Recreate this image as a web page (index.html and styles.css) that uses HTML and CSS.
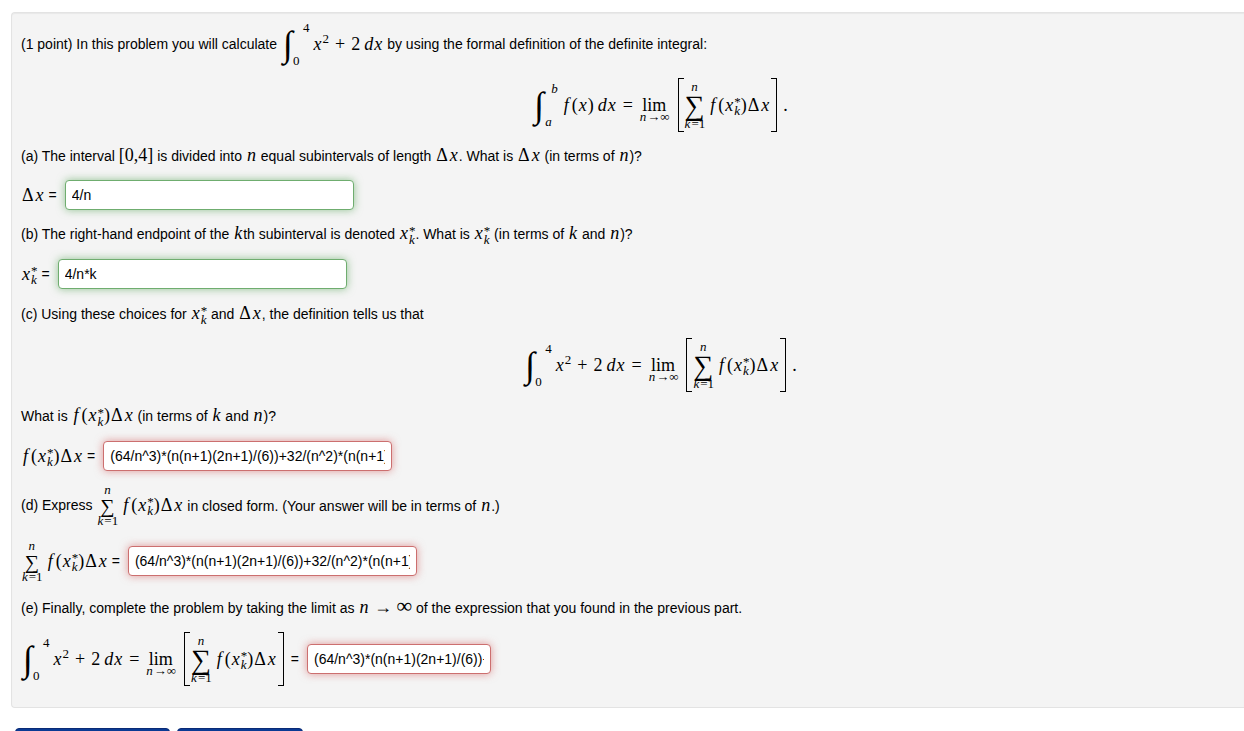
FILE: index.html
```html
<!DOCTYPE html>
<html lang="en">
<head>
    <meta charset="UTF-8">
    <meta name="viewport" content="width=device-width, initial-scale=1.0">
    <title>Definite integral</title>
    <link rel="stylesheet" href="styles.css">
</head>
<body>
<div class="problem">
    <div class="row intro">
        <span>(1 point) In this problem you will calculate</span>
        <span class="math"><span class="int">∫</span><span class="limits wide"><span>4</span><span>0</span></span><span><i>x</i><sup>2</sup></span><span class="rel">+</span><span>2</span><span class="diff"><i>d</i><i>x</i></span></span>
        <span>by using the formal definition of the definite integral:</span>
    </div>

    <div class="row display">
        <span class="math"><span class="int">∫</span><span class="limits"><i>b</i><i>a</i></span><span><i class="f">f</i>(<i>x</i>)</span><span class="diff"><i>d</i><i>x</i></span><span class="rel">=</span><span class="lim"><span>lim</span><small><i>n</i>→∞</small></span><span class="bracket"><span class="sum"><i>n</i><b>∑</b><small><i>k</i>=1</small></span><span><i class="f">f</i>(<i>x</i><span class="stack"><span>*</span><i>k</i></span>)<span class="delta">Δ</span><i>x</i></span></span><span class="end">.</span></span>
    </div>

    <!-- part a -->
    <p class="row text">(a) The interval <span class="tex">[0,4]</span> is divided into <span class="tex"><i>n</i></span> equal subintervals of length <span class="tex"><span class="delta">Δ</span><i>x</i></span>. What is <span class="tex"><span class="delta">Δ</span><i>x</i></span> (in terms of <span class="tex"><i>n</i></span>)?</p>
    <div class="row answer">
        <label for="ansA"><span class="tex"><span class="delta">Δ</span><i>x</i></span> =</label>
        <input type="text" id="ansA" class="correct" value="4/n">
    </div>

    <!-- part b -->
    <p class="row text">(b) The right-hand endpoint of the <span class="tex"><i>k</i></span>th subinterval is denoted <span class="tex"><i>x</i><span class="stack"><span>*</span><i>k</i></span></span>. What is <span class="tex"><i>x</i><span class="stack"><span>*</span><i>k</i></span></span> (in terms of <span class="tex"><i>k</i></span> and <span class="tex"><i>n</i></span>)?</p>
    <div class="row answer tall">
        <label for="ansB"><span class="tex"><i>x</i><span class="stack"><span>*</span><i>k</i></span></span> =</label>
        <input type="text" id="ansB" class="correct" value="4/n*k">
    </div>

    <!-- part c -->
    <p class="row text">(c) Using these choices for <span class="tex"><i>x</i><span class="stack"><span>*</span><i>k</i></span></span> and <span class="tex"><span class="delta">Δ</span><i>x</i></span>, the definition tells us that</p>
    <div class="row display">
        <span class="math"><span class="int">∫</span><span class="limits wide"><span>4</span><span>0</span></span><span><i>x</i><sup>2</sup></span><span class="rel">+</span><span>2</span><span class="diff"><i>d</i><i>x</i></span><span class="rel">=</span><span class="lim"><span>lim</span><small><i>n</i>→∞</small></span><span class="bracket"><span class="sum"><i>n</i><b>∑</b><small><i>k</i>=1</small></span><span><i class="f">f</i>(<i>x</i><span class="stack"><span>*</span><i>k</i></span>)<span class="delta">Δ</span><i>x</i></span></span><span class="end">.</span></span>
    </div>
    <p class="row text">What is <span class="tex"><i class="f">f</i>(<i>x</i><span class="stack"><span>*</span><i>k</i></span>)<span class="delta">Δ</span><i>x</i></span> (in terms of <span class="tex"><i>k</i></span> and <span class="tex"><i>n</i></span>)?</p>
    <div class="row answer tall">
        <label for="ansC"><span class="tex"><i class="f">f</i>(<i>x</i><span class="stack"><span>*</span><i>k</i></span>)<span class="delta">Δ</span><i>x</i></span> =</label>
        <input type="text" id="ansC" class="incorrect" value="(64/n^3)*(n(n+1)(2n+1)/(6))+32/(n^2)*(n(n+1)/2)">
    </div>

    <!-- part d -->
    <div class="row express">
        <span>(d) Express</span>
        <span class="math"><span class="sum small"><i>n</i><b>∑</b><small><i>k</i>=1</small></span><span><i class="f">f</i>(<i>x</i><span class="stack"><span>*</span><i>k</i></span>)<span class="delta">Δ</span><i>x</i></span></span>
        <span>in closed form. (Your answer will be in terms of <span class="tex"><i>n</i></span>.)</span>
    </div>
    <div class="row answer series">
        <label for="ansD"><span class="math"><span class="sum small"><i>n</i><b>∑</b><small><i>k</i>=1</small></span><span><i class="f">f</i>(<i>x</i><span class="stack"><span>*</span><i>k</i></span>)<span class="delta">Δ</span><i>x</i></span></span> =</label>
        <input type="text" id="ansD" class="incorrect" value="(64/n^3)*(n(n+1)(2n+1)/(6))+32/(n^2)*(n(n+1)/2)">
    </div>

    <!-- part e -->
    <p class="row text">(e) Finally, complete the problem by taking the limit as <span class="tex"><i>n</i> → <span class="inf">∞</span></span> of the expression that you found in the previous part.</p>
    <div class="row answer final">
        <label for="ansE"><span class="math"><span class="int">∫</span><span class="limits wide"><span>4</span><span>0</span></span><span><i>x</i><sup>2</sup></span><span class="rel">+</span><span>2</span><span class="diff"><i>d</i><i>x</i></span><span class="rel">=</span><span class="lim"><span>lim</span><small><i>n</i>→∞</small></span><span class="bracket"><span class="sum"><i>n</i><b>∑</b><small><i>k</i>=1</small></span><span><i class="f">f</i>(<i>x</i><span class="stack"><span>*</span><i>k</i></span>)<span class="delta">Δ</span><i>x</i></span></span></span> =</label>
        <input type="text" id="ansE" class="incorrect short" value="(64/n^3)*(n(n+1)(2n+1)/(6))+32/(n^2)*(n(n+1)/2)">
    </div>
</div>

<div class="buttons">
    <button type="button" class="preview"></button>
    <button type="button" class="submit"></button>
</div>
</body>
</html>
```
FILE: styles.css
```css
* {
    box-sizing: border-box;
}
html, body {
    height: 100%;
    overflow: hidden;
}
body {
    margin: 0;
    padding: 12px 0 0 11px;
    background: #fff;
    color: #000;
    font: 14px "Liberation Sans", Arial, sans-serif;
}

.problem {
    display: flex;
    flex-direction: column;
    gap: 10px;
    padding: 9px 0 19px 9px;
    background: #f4f4f4;
    border: 1px solid #e3e3e3;
    border-right: none;
    border-radius: 4px 0 0 4px;
    box-shadow: inset 0 1px 1px rgba(0, 0, 0, 0.05);
}
.row {
    display: flex;
    align-items: center;
    gap: 4px;
    margin: 0;
    white-space: nowrap;
}
.text {
    display: block;
    height: 24px;
    line-height: 24px;
}
.intro {
    height: 44px;
}
.display {
    height: 58px;
    padding-left: 55px;
    justify-content: center;
}
.answer {
    height: 34px;
    gap: 8px;
}
.tall {
    height: 36px;
}
.express {
    height: 42px;
}
.series {
    height: 50px;
}
.final {
    height: 58px;
}
label {
    display: flex;
    align-items: center;
    gap: 4px;
}
.final label {
    gap: 7px;
}

/* formulas */
.tex, .math {
    font-family: "Liberation Serif", "Times New Roman", serif;
    font-size: 18px;
    line-height: 20px;
}
.math {
    display: inline-flex;
    align-items: center;
}
.tex i, .math i {
    padding: 0 1px;
}
.tex .f, .math .f {
    padding: 0 3px 0 2px;
}
.math .diff i {
    padding: 0 1px 0 0;
}
.delta {
    padding: 0 1px;
}
.inf {
    font-size: 22px;
    line-height: 20px;
}
.math sup {
    font-size: 13px;
    line-height: 1px;
}
.stack {
    display: inline-flex;
    flex-direction: column;
    vertical-align: middle;
    font-size: 13px;
    line-height: 9px;
}
.stack i {
    padding: 0;
}
.rel {
    padding: 0 6px;
}
.diff {
    padding-left: 4px;
}
.int {
    width: 10px;
    margin-left: 2px;
    font-size: 36px;
    line-height: 44px;
}
.limits {
    display: flex;
    flex-direction: column;
    justify-content: space-between;
    height: 46px;
    padding-right: 3px;
    font-size: 13px;
    line-height: 13px;
}
.limits :first-child {
    padding-left: 7px;
}
.limits.wide :first-child {
    padding-left: 10px;
}
.lim {
    display: flex;
    flex-direction: column;
    align-items: center;
    padding-top: 9px;
    line-height: 14px;
}
.math small {
    font-size: 13px;
    line-height: 10px;
}
.sum {
    display: flex;
    flex-direction: column;
    align-items: center;
    margin-right: 3px;
    font-size: 13px;
    line-height: 12px;
}
.sum b {
    font-size: 28px;
    font-weight: normal;
    line-height: 26px;
}
.sum.small b {
    font-size: 20px;
    line-height: 20px;
}
.bracket {
    display: flex;
    align-items: center;
    margin-left: 8px;
}
.bracket::before, .bracket::after {
    content: "";
    width: 5px;
    height: 52px;
    border: 1px solid #000;
}
.bracket::before {
    border-right: none;
}
.bracket::after {
    margin-left: 1px;
    border-left: none;
}
.end {
    padding-left: 6px;
}

/* answer boxes */
input {
    width: 289px;
    height: 30px;
    padding: 0 6px;
    background: #fff;
    border: 1px solid #ccc;
    border-radius: 4px;
    color: #000;
    font: 14px "Liberation Sans", Arial, sans-serif;
}
.short {
    width: 184px;
}
.correct {
    border-color: #6fad6f;
    box-shadow: 0 0 8px rgba(80, 160, 80, 0.6);
}
.incorrect {
    border-color: #cc6f6f;
    box-shadow: 0 0 8px rgba(210, 90, 90, 0.6);
}

.buttons {
    display: flex;
    gap: 7px;
    margin-top: 20px;
    padding-left: 4px;
}
button {
    height: 30px;
    background: #0a3a94;
    border: 1px solid #0a2a75;
    border-radius: 4px;
}
.preview {
    width: 155px;
}
.submit {
    width: 126px;
}
```
